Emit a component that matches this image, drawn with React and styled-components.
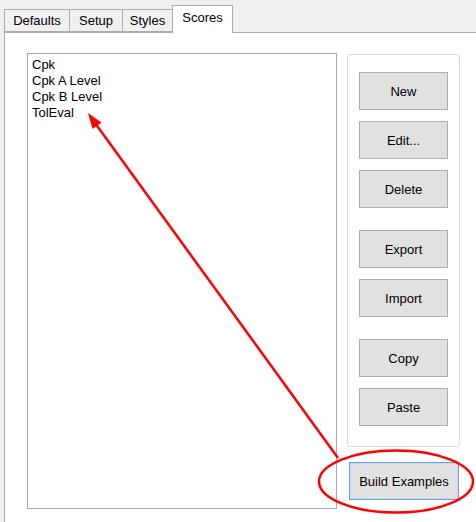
import React from 'react'
import styled, { createGlobalStyle } from 'styled-components'

const GlobalStyle = createGlobalStyle`
  html, body {
    margin: 0;
    padding: 0;
    height: 100%;
    overflow: hidden;
    background: #f0f0f0;
  }
  #root {
    height: 100%;
  }
`

const Window = styled.div`
  position: relative;
  width: 476px;
  height: 522px;
  display: flex;
  flex-direction: column;
  font-family: 'Liberation Sans', Arial, sans-serif;
  font-size: 13px;
  color: #000;
  background: #f0f0f0;
`

const TabStrip = styled.div`
  display: flex;
  align-items: flex-end;
  height: 32px;
  padding-left: 4px;
  box-sizing: border-box;
`

const Tab = styled.div`
  height: ${(p) => (p.$active ? '28px' : '23px')};
  padding: 0 ${(p) => (p.$active ? '8px' : '5px')};
  box-sizing: border-box;
  display: flex;
  align-items: center;
  justify-content: center;
  border: 1px solid #acacac;
  border-bottom: ${(p) => (p.$active ? 'none' : '1px solid #acacac')};
  margin-left: ${(p) => (p.$first ? '0' : '-1px')};
  background: ${(p) => (p.$active ? '#ffffff' : '#f0f0f0')};
  padding-bottom: ${(p) => (p.$active ? '5px' : '1px')};
  position: relative;
  z-index: ${(p) => (p.$active ? 2 : 1)};
  margin-bottom: ${(p) => (p.$active ? '-1px' : '0')};
  width: ${(p) => p.$w}px;
`

const Page = styled.div`
  flex: 1;
  margin-left: 4px;
  border-left: 1px solid #acacac;
  border-top: 1px solid #acacac;
  background: #ffffff;
  display: flex;
  align-items: flex-start;
  padding: 20px 0 0 22px;
  gap: 10px;
`

const ListBox = styled.div`
  width: 310px;
  height: 456px;
  box-sizing: border-box;
  border: 1px solid #a8a8a8;
  padding: 3px 4px;
  display: flex;
  flex-direction: column;
`

const ListItem = styled.div`
  height: 16px;
  line-height: 16px;
  white-space: nowrap;
`

const Side = styled.div`
  display: flex;
  flex-direction: column;
  align-items: flex-start;
`

const GroupBox = styled.div`
  width: 113px;
  height: 393px;
  box-sizing: border-box;
  margin-top: 1px;
  border: 1px solid #dcdcdc;
  border-radius: 3px;
  padding: 17px 0 0 11px;
  display: flex;
  flex-direction: column;
`

const Button = styled.div`
  width: 89px;
  height: 38px;
  box-sizing: border-box;
  border: 1px solid #adadad;
  background: #e1e1e1;
  display: flex;
  align-items: center;
  justify-content: center;
  margin-top: ${(p) => p.$gap || 0}px;
`

const BuildButton = styled(Button)`
  width: 110px;
  margin-left: 2px;
  border: 1px solid #6c9fd6;
  box-shadow: inset 0 0 0 1px #c5dcf2;
`

const Annotation = styled.svg`
  position: absolute;
  left: 0;
  top: 0;
  pointer-events: none;
`

const items = ['Cpk', 'Cpk A Level', 'Cpk B Level', 'TolEval']

const buttons = [
  { label: 'New', gap: 0 },
  { label: 'Edit...', gap: 11 },
  { label: 'Delete', gap: 11 },
  { label: 'Export', gap: 22 },
  { label: 'Import', gap: 11 },
  { label: 'Copy', gap: 22 },
  { label: 'Paste', gap: 11 },
]

const App = () => {
  return (
    <>
      <GlobalStyle />
      <Window>
        <TabStrip>
          <Tab $first $w={66}>Defaults</Tab>
          <Tab $w={54}>Setup</Tab>
          <Tab $w={51}>Styles</Tab>
          <Tab $active $w={61}>Scores</Tab>
        </TabStrip>
        <Page>
          <ListBox>
            {items.map((item) => (
              <ListItem key={item}>{item}</ListItem>
            ))}
          </ListBox>
          <Side>
            <GroupBox>
              {buttons.map((b) => (
                <Button key={b.label} $gap={b.gap}>
                  {b.label}
                </Button>
              ))}
            </GroupBox>
            <BuildButton $gap={15}>Build Examples</BuildButton>
          </Side>
        </Page>
        <Annotation width="476" height="522" viewBox="0 0 476 522">
          <ellipse
            cx="396"
            cy="481.5"
            rx="77"
            ry="31"
            fill="none"
            stroke="#ff0000"
            strokeWidth="2.5"
          />
          <line
            x1="338"
            y1="458"
            x2="95"
            y2="123"
            stroke="#ff0000"
            strokeWidth="2.5"
          />
          <polygon points="88,113 92.5,129 101.5,122.5" fill="#ff0000" />
        </Annotation>
      </Window>
    </>
  )
}

export default App
